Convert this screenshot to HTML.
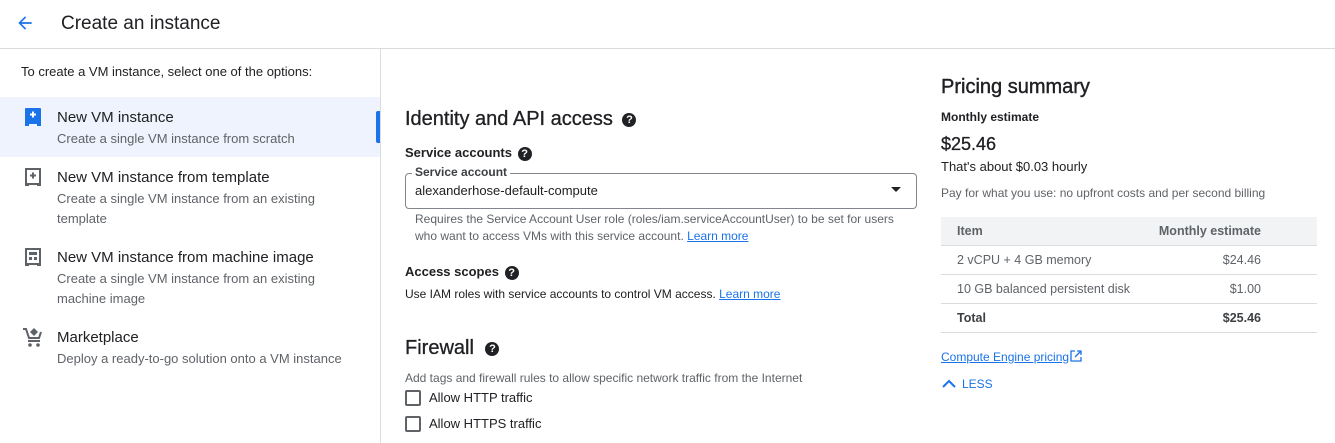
<!DOCTYPE html>
<html><head><meta charset="utf-8"><style>
*{margin:0;padding:0;box-sizing:border-box}
body{width:1335px;height:443px;overflow:hidden;background:#fff;font-family:"Liberation Sans",Roboto,Arial,sans-serif;color:#202124;position:relative}
.a{position:absolute;white-space:nowrap}
.t{font-size:15px;color:#202124}
.d{font-size:13px;color:#5f6368;line-height:20px}
.q{display:inline-block;width:14px;height:14px;border-radius:50%;background:#202124;color:#fff;font-size:11px;font-weight:bold;text-align:center;line-height:14px;vertical-align:middle}
a{color:#1a73e8;text-decoration:underline}
.row{position:absolute;left:941px;width:376px;height:29px;border-bottom:1px solid #dadce0;font-size:12.5px;color:#5f6368;line-height:29px}
.row span{position:absolute}
.cb{position:absolute;left:405px;width:16px;height:16px;border:2px solid #5f6368;border-radius:2px}
</style></head><body>
<svg class="a" style="left:14px;top:13px" width="22" height="20" viewBox="0 0 24 24"><path d="M20 11H7.8l5.6-5.6L12 4l-8 8 8 8 1.4-1.4L7.8 13H20z" fill="#1a73e8"/></svg>
<div class="a" style="left:61px;top:13px;font-size:19px;color:#202124">Create an instance</div>
<div class="a" style="left:0;top:48px;width:1335px;height:1px;background:#dadce0"></div>
<div class="a" style="left:380px;top:49px;width:1px;height:394px;background:#dadce0"></div>

<div class="a" style="left:21px;top:64px;font-size:13px">To create a VM instance, select one of the options:</div>
<div class="a" style="left:0;top:97px;width:380px;height:60px;background:#eef3fd"></div>
<div class="a" style="left:376px;top:111px;width:4px;height:32px;background:#1a73e8;border-radius:2px 0 0 2px"></div>

<svg class="a" style="left:24px;top:107px" width="18" height="20" viewBox="0 0 18 20"><path d="M1 2a1 1 0 0 1 1-1h14a1 1 0 0 1 1 1v17h-4v-2H5v2H1z" fill="#1a73e8"/><path d="M9 4.5v6M6 7.5h6" stroke="#fff" stroke-width="2"/></svg>
<div class="a t" style="left:57px;top:109px">New VM instance</div>
<div class="a d" style="left:57px;top:129px">Create a single VM instance from scratch</div>

<svg class="a" style="left:24px;top:167px" width="18" height="20" viewBox="0 0 18 20"><path d="M2 2h14v15H2z" fill="none" stroke="#5f6368" stroke-width="2"/><path d="M1 17h4v2H1zM13 17h4v2h-4z" fill="#5f6368"/><path d="M9 5.5v6M6 8.5h6" stroke="#5f6368" stroke-width="2"/></svg>
<div class="a t" style="left:57px;top:169px">New VM instance from template</div>
<div class="a d" style="left:57px;top:189px;white-space:normal;width:300px">Create a single VM instance from an existing template</div>

<svg class="a" style="left:24px;top:247px" width="18" height="20" viewBox="0 0 18 20"><path d="M2 2h14v15H2z" fill="none" stroke="#5f6368" stroke-width="2"/><path d="M1 17h4v2H1zM13 17h4v2h-4z" fill="#5f6368"/><path d="M5 5h8v3H5zM5 10h3v3H5zM10 10h3v3h-3z" fill="#5f6368"/></svg>
<div class="a t" style="left:57px;top:249px">New VM instance from machine image</div>
<div class="a d" style="left:57px;top:269px;white-space:normal;width:300px">Create a single VM instance from an existing machine image</div>

<svg class="a" style="left:22px;top:326px" width="22" height="22" viewBox="0 0 22 22"><path d="M1 3h3l3 9h10l2-6" fill="none" stroke="#5f6368" stroke-width="2"/><path d="M6 15h12" stroke="#5f6368" stroke-width="2"/><circle cx="8" cy="19" r="1.8" fill="#5f6368"/><circle cx="16" cy="19" r="1.8" fill="#5f6368"/><path d="M12 2l4 4-4 4-4-4z" fill="#5f6368"/></svg>
<div class="a t" style="left:57px;top:329px">Marketplace</div>
<div class="a d" style="left:57px;top:349px">Deploy a ready-to-go solution onto a VM instance</div>

<div class="a" style="left:405px;top:108px;font-size:20px;-webkit-text-stroke:0.3px #202124">Identity and API access <span class="q" style="margin-left:4px;-webkit-text-stroke:0">?</span></div>
<div class="a" style="left:405px;top:145px;font-size:13px;font-weight:600;color:#202124">Service accounts <span class="q" style="margin-left:2px">?</span></div>
<div class="a" style="left:405px;top:173px;width:512px;height:36px;border:1px solid #80868b;border-radius:4px"></div>
<div class="a" style="left:412px;top:165px;background:#fff;padding:0 3px;font-size:12px;color:#3c4043;font-weight:600">Service account</div>
<div class="a" style="left:415px;top:183px;font-size:13px">alexanderhose-default-compute</div>
<svg class="a" style="left:890px;top:186px" width="12" height="8"><path d="M1 1h10L6 6z" fill="#202124"/></svg>
<div class="a" style="left:415px;top:211px;font-size:12px;color:#5f6368;line-height:17px">Requires the Service Account User role (roles/iam.serviceAccountUser) to be set for users<br>who want to access VMs with this service account. <a>Learn more</a></div>
<div class="a" style="left:405px;top:264px;font-size:13px;font-weight:600;color:#202124">Access scopes <span class="q" style="margin-left:2px">?</span></div>
<div class="a" style="left:405px;top:287px;font-size:12px;color:#202124">Use IAM roles with service accounts to control VM access. <a>Learn more</a></div>
<div class="a" style="left:405px;top:337px;font-size:20px;-webkit-text-stroke:0.3px #202124">Firewall <span class="q" style="margin-left:6px;-webkit-text-stroke:0">?</span></div>
<div class="a" style="left:405px;top:371px;font-size:12px;color:#5f6368">Add tags and firewall rules to allow specific network traffic from the Internet</div>
<div class="cb" style="top:390px"></div>
<div class="a" style="left:429px;top:390px;font-size:13px">Allow HTTP traffic</div>
<div class="cb" style="top:416px"></div>
<div class="a" style="left:429px;top:416px;font-size:13px">Allow HTTPS traffic</div>

<div class="a" style="left:941px;top:76px;font-size:20px;-webkit-text-stroke:0.4px #202124">Pricing summary</div>
<div class="a" style="left:941px;top:110px;font-size:12px;font-weight:600">Monthly estimate</div>
<div class="a" style="left:941px;top:134px;font-size:18px;-webkit-text-stroke:0.3px #202124">$25.46</div>
<div class="a" style="left:941px;top:159px;font-size:13px">That's about $0.03 hourly</div>
<div class="a" style="left:941px;top:186px;font-size:12px;color:#5f6368">Pay for what you use: no upfront costs and per second billing</div>
<div class="row" style="top:217px;background:#f1f3f4;font-weight:600"><span style="left:16px">Item</span><span style="right:56px">Monthly estimate</span></div>
<div class="row" style="top:246px"><span style="left:16px">2 vCPU + 4 GB memory</span><span style="right:56px">$24.46</span></div>
<div class="row" style="top:275px"><span style="left:16px">10 GB balanced persistent disk</span><span style="right:56px">$1.00</span></div>
<div class="row" style="top:304px;font-weight:600;color:#3c4043"><span style="left:16px">Total</span><span style="right:56px">$25.46</span></div>
<div class="a" style="left:941px;top:350px;font-size:12px"><a>Compute Engine pricing</a></div>
<svg class="a" style="left:1070px;top:350px" width="12" height="12" viewBox="0 0 12 12"><path d="M5 1H1v10h10V7M7 1h4v4M11 1L5 7" fill="none" stroke="#1a73e8" stroke-width="1.3"/></svg>
<svg class="a" style="left:942px;top:379px" width="14" height="10"><path d="M1 8l6-6 6 6" fill="none" stroke="#1a73e8" stroke-width="2"/></svg>
<div class="a" style="left:962px;top:377px;font-size:12px;color:#1a73e8;font-weight:500">LESS</div>
</body></html>
